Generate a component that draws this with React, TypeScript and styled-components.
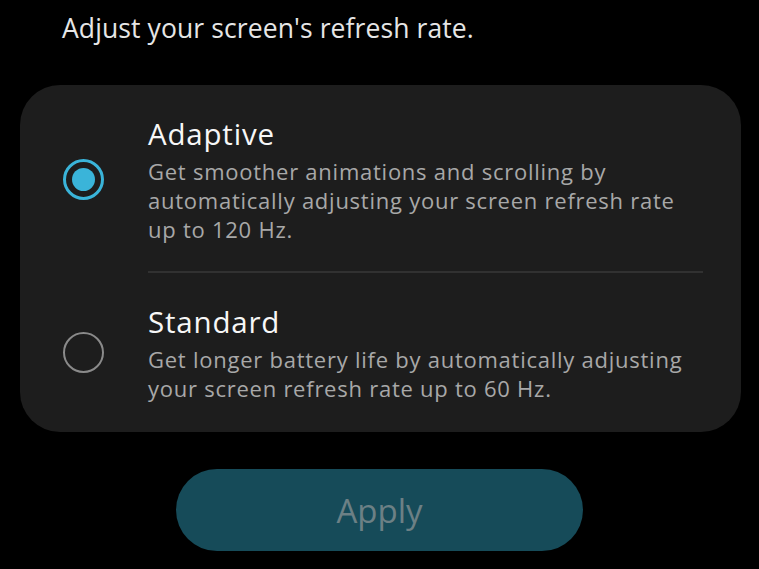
import styled, { createGlobalStyle } from "styled-components";

/* ── Data ───────────────────────────────────────────────── */

type Option = {
  id: string;
  title: string;
  lines: string[];
};

const options: Option[] = [
  {
    id: "adaptive",
    title: "Adaptive",
    lines: [
      "Get smoother animations and scrolling by",
      "automatically adjusting your screen refresh rate",
      "up to 120 Hz.",
    ],
  },
  {
    id: "standard",
    title: "Standard",
    lines: [
      "Get longer battery life by automatically adjusting",
      "your screen refresh rate up to 60 Hz.",
    ],
  },
];

/* ── Styles ─────────────────────────────────────────────── */

const Global = createGlobalStyle`
  html, body {
    margin: 0;
    padding: 0;
    background: #000;
  }
  body {
    font-family: "Open Sans", "Noto Sans", sans-serif;
    -webkit-font-smoothing: antialiased;
  }
`;

const Screen = styled.div`
  width: 759px;
  height: 569px;
  overflow: hidden;
  background: #000;
  display: flex;
  flex-direction: column;
`;

const Intro = styled.p`
  margin: 11px 0 0 62px;
  font-size: 26.5px;
  line-height: 34px;
  letter-spacing: 0.1px;
  color: #e6e6e6;
`;

const Card = styled.div`
  margin: 40px 18px 0 20px;
  background: #1d1d1d;
  border-radius: 40px;
  padding: 1px 0;
`;

const Row = styled.label`
  display: flex;
  align-items: center;
  cursor: pointer;
`;

const RadioCol = styled.div`
  width: 126px;
  padding-right: 2px;
  flex-shrink: 0;
  display: flex;
  justify-content: center;
`;

const Radio = styled.span<{ $checked: boolean }>`
  width: 41px;
  height: 41px;
  box-sizing: border-box;
  border-radius: 50%;
  border: ${(p) => (p.$checked ? "3px solid #3ab4d9" : "2px solid #8a8a8a")};
  display: flex;
  align-items: center;
  justify-content: center;

  &::after {
    content: "";
    display: ${(p) => (p.$checked ? "block" : "none")};
    width: 23px;
    height: 23px;
    border-radius: 50%;
    background: #3ab4d9;
  }
`;

const Body = styled.div<{ $divider: boolean }>`
  flex: 1;
  margin-right: 38px;
  padding: ${(p) => (p.$divider ? "30px 0 27px" : "31px 0 28px")};
  border-bottom: ${(p) => (p.$divider ? "2px solid #313131" : "none")};
`;

const Title = styled.div`
  font-size: 29.5px;
  line-height: 36px;
  letter-spacing: 0.8px;
  color: #f7f7f7;
  margin-bottom: 5px;
`;

const Desc = styled.div`
  font-size: 22px;
  line-height: 29px;
  color: #a8a8a8;
  letter-spacing: 0.75px;
  white-space: nowrap;
`;

const ButtonRow = styled.div`
  display: flex;
  justify-content: center;
  padding-top: 37px;
`;

const ApplyButton = styled.button`
  width: 407px;
  height: 82px;
  border: none;
  border-radius: 41px;
  background: #164b59;
  color: #6c8085;
  font-family: "Open Sans", "Noto Sans", sans-serif;
  font-size: 33px;
  padding: 0;
  cursor: default;
`;

/* ── Component ───────────────────────────────────────────── */

export default function App() {
  const selected = "adaptive";

  return (
    <>
      <Global />
      <Screen>
        <Intro>Adjust your screen's refresh rate.</Intro>
        <Card>
          {options.map((opt, i) => (
            <Row key={opt.id}>
              <RadioCol>
                <Radio $checked={opt.id === selected} />
              </RadioCol>
              <Body $divider={i < options.length - 1}>
                <Title>{opt.title}</Title>
                {opt.lines.map((line) => (
                  <Desc key={line}>{line}</Desc>
                ))}
              </Body>
            </Row>
          ))}
        </Card>
        <ButtonRow>
          <ApplyButton disabled>Apply</ApplyButton>
        </ButtonRow>
      </Screen>
    </>
  );
}
